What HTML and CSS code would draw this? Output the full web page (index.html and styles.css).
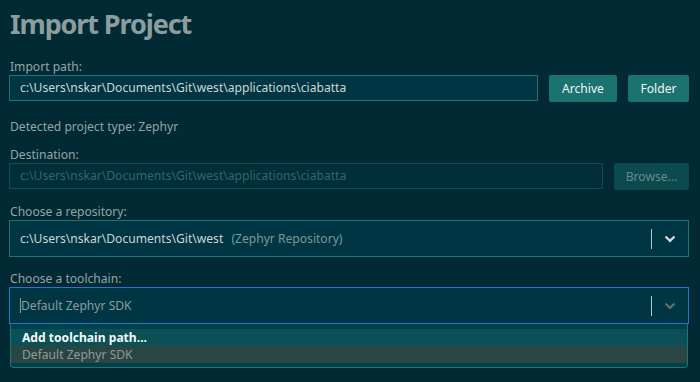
FILE: index.html
```html
<!DOCTYPE html>
<html lang="en">
<head>
    <meta charset="UTF-8">
    <title>Import Project</title>
    <link rel="stylesheet" href="styles.css">
</head>
<body>
    <div class="page">
        <h1>Import Project</h1>

        <label class="field-label">Import path:</label>
        <div class="row">
            <div class="text-input">c:\Users\nskar\Documents\Git\west\applications\ciabatta</div>
            <button class="btn btn-archive">Archive</button>
            <button class="btn btn-folder">Folder</button>
        </div>

        <div class="detected">Detected project type: Zephyr</div>

        <label class="field-label">Destination:</label>
        <div class="row">
            <div class="text-input disabled">c:\Users\nskar\Documents\Git\west\applications\ciabatta</div>
            <button class="btn btn-disabled">Browse...</button>
        </div>

        <label class="field-label gap">Choose a repository:</label>
        <div class="select">
            <div class="select-value">c:\Users\nskar\Documents\Git\west <span class="hint">(Zephyr Repository)</span></div>
            <span class="divider"></span>
            <svg class="chevron" width="12" height="8" viewBox="0 0 12 8"><path d="M1.5 1.5 L6 5.8 L10.5 1.5" fill="none" stroke="currentColor" stroke-width="2.4"/></svg>
        </div>

        <label class="field-label gap">Choose a toolchain:</label>
        <div class="select focused">
            <div class="select-value muted"><span class="caret"></span>Default Zephyr SDK</div>
            <span class="divider"></span>
            <svg class="chevron dim" width="12" height="8" viewBox="0 0 12 8"><path d="M1.5 1.5 L6 5.8 L10.5 1.5" fill="none" stroke="currentColor" stroke-width="2.4"/></svg>
        </div>
        <div class="menu">
            <div class="menu-item active">Add toolchain path...</div>
            <div class="menu-item selected">Default Zephyr SDK</div>
        </div>
    </div>
</body>
</html>
```

FILE: styles.css
```css
body {
    margin: 0;
    background-color: #012a35;
    font-family: "Noto Sans", "Open Sans", sans-serif;
    font-size: 12.1px;
    color: #93a5a5;
    width: 700px;
    height: 382px;
    overflow: hidden;
}

.page {
    padding: 5px 11px 0 9px;
    display: flex;
    flex-direction: column;
}

h1 {
    margin: 0 0 15px 1px;
    font-size: 27px;
    font-weight: bold;
    line-height: 38px;
    color: #8b9e9f;
    letter-spacing: -1.1px;
}

.field-label {
    display: block;
    line-height: 17px;
    margin-left: 1px;
}

.field-label.gap {
    margin-top: 13px;
}

.row {
    display: flex;
    align-items: stretch;
    gap: 11px;
}

.text-input {
    flex: 1;
    height: 24px;
    line-height: 24px;
    padding: 0 10px;
    background-color: #003643;
    border: 1px solid #1a7776;
    color: #cdd6d6;
    white-space: nowrap;
    overflow: hidden;
}

.text-input.disabled {
    background-color: #002e39;
    border-color: #0f4d50;
    color: #3b6467;
}

.btn {
    font-family: inherit;
    font-size: 12.1px;
    background-color: #1b7370;
    color: #f2f6f6;
    border: none;
    border-radius: 2px;
    padding: 0;
    height: 27px;
    cursor: pointer;
}

.btn-archive {
    width: 68px;
}

.btn-folder {
    width: 61px;
}

.btn-disabled {
    width: 75px;
    background-color: #0b4a4f;
    color: #6a8989;
}

.detected {
    line-height: 17px;
    margin: 16px 0 11px 1px;
}

.select {
    display: flex;
    align-items: center;
    height: 35px;
    background-color: #003643;
    border: 1px solid #1a7776;
    padding: 0 12px 0 10px;
}

.select.focused {
    border-color: #1e78d4;
}

.select-value {
    flex: 1;
    color: #cdd6d6;
    white-space: nowrap;
}

.select-value.muted {
    color: #8c9c9b;
}

.hint {
    color: #7f9696;
    margin-left: 5px;
}

.caret {
    display: inline-block;
    width: 1px;
    height: 15px;
    background-color: #8c9c9b;
    vertical-align: -3px;
}

.divider {
    width: 1px;
    height: 20px;
    background-color: #b9c4c4;
    margin-right: 12px;
}

.chevron {
    color: #d4dcdc;
}

.chevron.dim {
    color: #5c6f70;
}

.menu {
    margin: 0 1px 0 1px;
    padding: 5px 0 4px 0;
    background-color: #00404a;
    border: 1px solid #1a7776;
    border-top: none;
    border-radius: 0 0 4px 4px;
}

.menu-item {
    height: 17px;
    line-height: 17px;
    padding-left: 11px;
}

.menu-item.active {
    background-color: #0a5056;
    color: #f5f8f8;
    font-weight: bold;
}

.menu-item.selected {
    background-color: #2b4642;
    color: #8a9c9a;
}
```
